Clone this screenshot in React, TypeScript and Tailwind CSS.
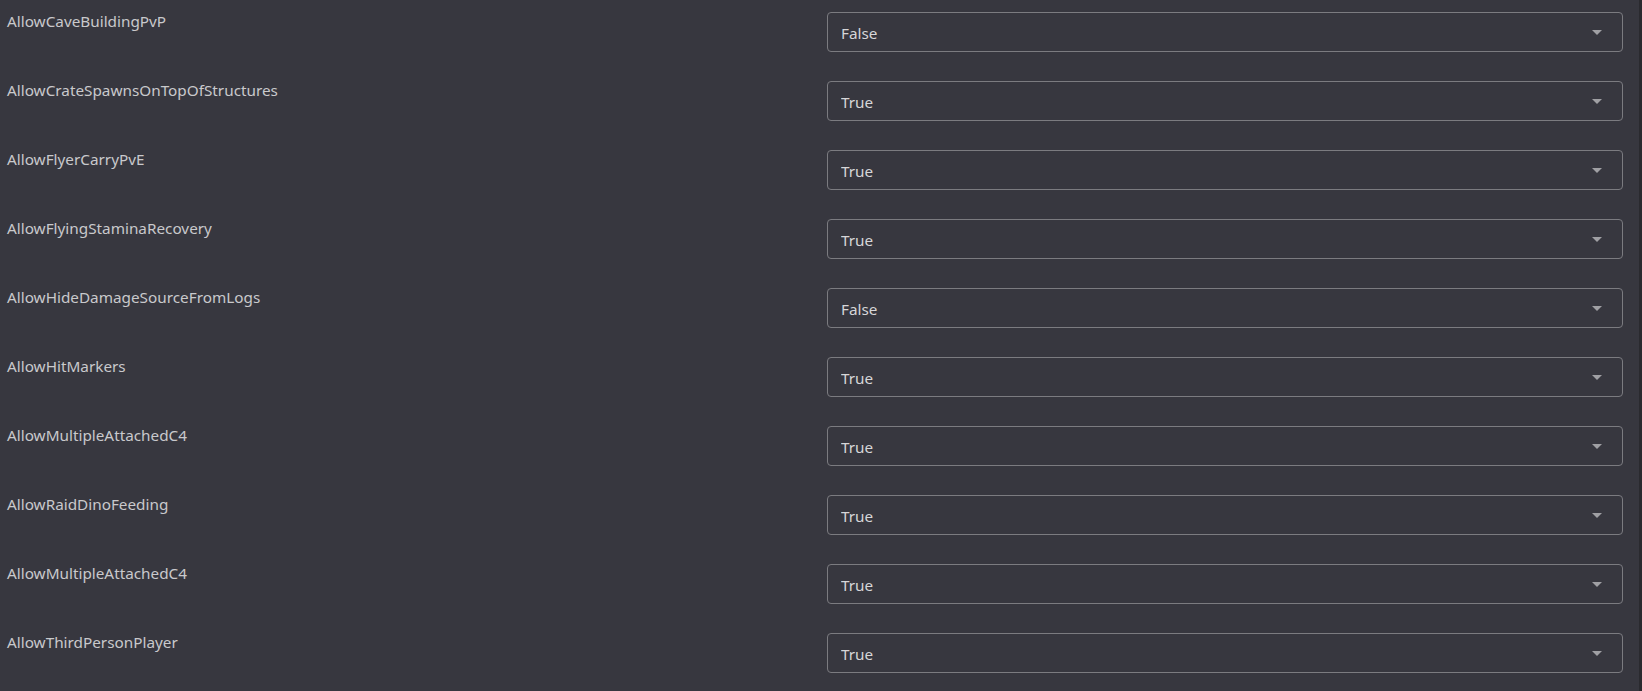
import { useState } from "react";

const settings = [
  { name: "AllowCaveBuildingPvP", value: "False" },
  { name: "AllowCrateSpawnsOnTopOfStructures", value: "True" },
  { name: "AllowFlyerCarryPvE", value: "True" },
  { name: "AllowFlyingStaminaRecovery", value: "True" },
  { name: "AllowHideDamageSourceFromLogs", value: "False" },
  { name: "AllowHitMarkers", value: "True" },
  { name: "AllowMultipleAttachedC4", value: "True" },
  { name: "AllowRaidDinoFeeding", value: "True" },
  { name: "AllowMultipleAttachedC4", value: "True" },
  { name: "AllowThirdPersonPlayer", value: "True" },
];

function SettingRow({ name, value }: { name: string; value: string }) {
  const [val, setVal] = useState(value);

  return (
    <div className="flex items-start h-[69px]">
      {/* label */}
      <div className="w-[820px] pt-[11px] text-[15.3px] leading-[20px] text-[#c9c9cc]">
        {name}
      </div>

      {/* select */}
      <div className="relative mt-[12px] w-[796px] h-[40px]">
        <select
          value={val}
          onChange={(e) => setVal(e.target.value)}
          className="appearance-none w-full h-full rounded-[4px] border border-[#7b7b80] bg-[#37373f] pl-[13px] pt-[2px] text-[15.3px] text-[#d6d6d8] outline-none"
        >
          <option>True</option>
          <option>False</option>
        </select>
        <svg
          viewBox="0 0 10 5"
          width="10"
          height="5"
          className="absolute right-[21px] top-[18px] pointer-events-none"
          fill="#a0a0a4"
        >
          <path d="M0 0h10L5 5z" />
        </svg>
      </div>
    </div>
  );
}

export default function App() {
  return (
    <div
      className="flex h-[691px] bg-[#37373f] overflow-hidden"
      style={{ fontFamily: '"Segoe UI", "Noto Sans", "Open Sans", sans-serif' }}
    >
      <div className="flex-1 pl-[7px]">
        {settings.map((s, i) => (
          <SettingRow key={i} name={s.name} value={s.value} />
        ))}
      </div>
      <div className="w-[3px] bg-[#2a2a2f]" />
    </div>
  );
}
